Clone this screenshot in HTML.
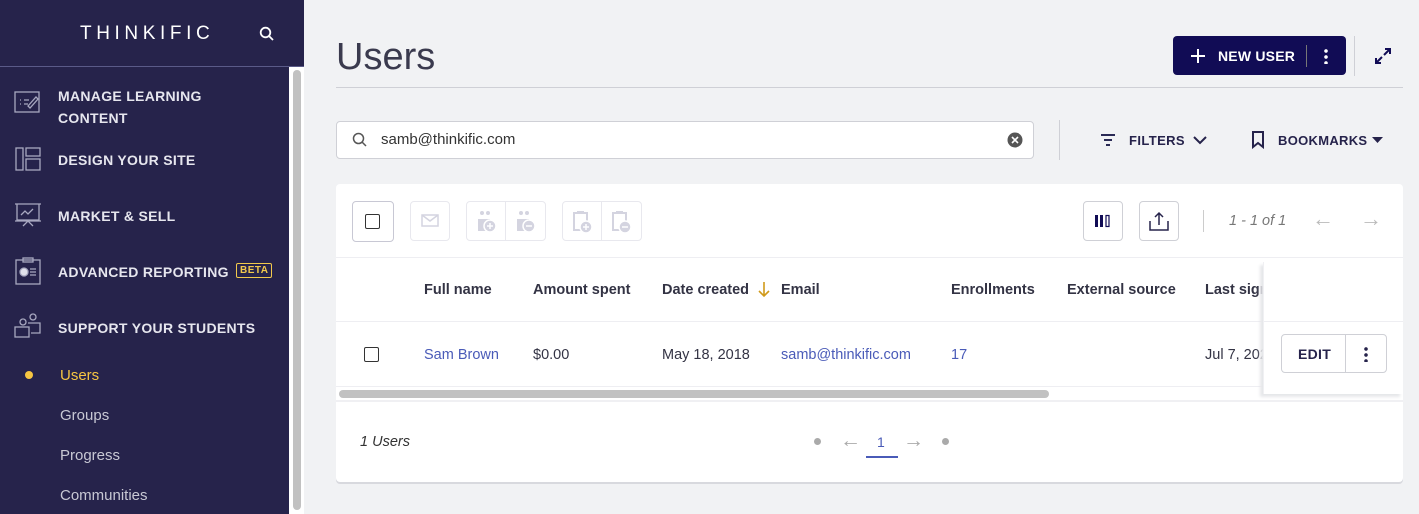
<!DOCTYPE html>
<html><head><meta charset="utf-8"><style>
*{box-sizing:border-box;margin:0;padding:0}
body{width:1419px;height:514px;overflow:hidden;background:#f1f2f4;font-family:"Liberation Sans",sans-serif;position:relative}
.a{position:absolute}
.side{left:0;top:0;width:304px;height:514px;background:#26234b}
.nav{color:#e6e6ee;font-size:14px;font-weight:bold;letter-spacing:.3px}
.sub{color:#c8c8d4;font-size:15px}
.btn{border:1px solid #e8e8ee;border-radius:4px;background:#fff}
.th{font-size:14.5px;font-weight:bold;color:#333344;top:282px}
.td{font-size:14.5px;color:#333344;top:347px}
.lk{color:#4a5bb8}
</style></head><body>
<div class="a side"></div>
<div class="a" style="left:0;top:66px;width:304px;height:1px;background:#5a5a88"></div>
<div class="a" style="left:80px;top:23px;color:#fff;font-size:19px;letter-spacing:4.6px">THINKIFIC</div>
<svg class="a" style="left:259px;top:26px" width="16" height="16" viewBox="0 0 16 16"><circle cx="6.5" cy="6.5" r="4.8" fill="none" stroke="#fff" stroke-width="1.8"/><path d="M10 10l4 4" stroke="#fff" stroke-width="1.8"/></svg>
<div class="a" style="left:289px;top:67px;width:15px;height:447px;background:#fff"></div>
<div class="a" style="left:293px;top:70px;width:8px;height:440px;background:#c1c1c1;border-radius:4px"></div>
<svg class="a" style="left:14px;top:88px" width="28" height="28" viewBox="0 0 28 28" fill="none" stroke="#a8a8c0" stroke-width="1.3"><rect x="1" y="4" width="24" height="20"/><path d="M6 12h1M6 16h1M10 12h5M10 16h4M14 18l8-9 2 2-8 9z"/></svg>
<div class="a nav" style="left:58px;top:85px;line-height:22px">MANAGE LEARNING<br>CONTENT</div>
<svg class="a" style="left:15px;top:147px" width="26" height="24" viewBox="0 0 26 24" fill="none" stroke="#a8a8c0" stroke-width="1.3"><rect x="1" y="1" width="7" height="22"/><rect x="11" y="1" width="14" height="8"/><rect x="11" y="12" width="14" height="11"/></svg>
<div class="a nav" style="left:58px;top:152px">DESIGN YOUR SITE</div>
<svg class="a" style="left:14px;top:203px" width="28" height="24" viewBox="0 0 28 24" fill="none" stroke="#a8a8c0" stroke-width="1.3"><path d="M1 1h26M3 1v16h22V1M1 18h26M9 23l5-5 5 5M7 12l4-4 3 3 5-5"/></svg>
<div class="a nav" style="left:58px;top:208px">MARKET &amp; SELL</div>
<svg class="a" style="left:15px;top:257px" width="26" height="28" viewBox="0 0 26 28" fill="none" stroke="#a8a8c0" stroke-width="1.3"><rect x="1" y="3" width="24" height="24"/><rect x="8" y="1" width="10" height="4"/><circle cx="9" cy="15" r="4" fill="#e0e0ea"/><path d="M15 12h6M15 15h6M15 18h6"/></svg>
<div class="a nav" style="left:58px;top:264px">ADVANCED REPORTING</div>
<div class="a" style="left:236px;top:263px;border:1px solid #f2c94c;color:#f2c94c;font-size:10px;font-weight:bold;padding:1px 3px;border-radius:2px;letter-spacing:.5px">BETA</div>
<svg class="a" style="left:14px;top:313px" width="28" height="26" viewBox="0 0 28 26" fill="none" stroke="#a8a8c0" stroke-width="1.3"><circle cx="9" cy="9" r="3"/><circle cx="19" cy="4" r="3"/><rect x="1" y="14" width="14" height="10"/><path d="M14 10h12v10h-9"/></svg>
<div class="a nav" style="left:58px;top:320px">SUPPORT YOUR STUDENTS</div>
<div class="a" style="left:25px;top:371px;width:8px;height:8px;border-radius:50%;background:#f6c542"></div>
<div class="a" style="left:60px;top:367px;color:#f6c542;font-size:15px">Users</div>
<div class="a sub" style="left:60px;top:407px">Groups</div>
<div class="a sub" style="left:60px;top:447px">Progress</div>
<div class="a sub" style="left:60px;top:487px">Communities</div>

<div class="a" style="left:336px;top:36px;font-size:38px;color:#3a3a4e;font-weight:300">Users</div>
<div class="a" style="left:336px;top:87px;width:1067px;height:1px;background:#cfd0d6"></div>
<div class="a" style="left:1173px;top:36px;width:173px;height:39px;background:#110c55;border-radius:4px"></div>
<svg class="a" style="left:1190px;top:48px" width="16" height="16"><path d="M8 1v14M1 8h14" stroke="#fff" stroke-width="2"/></svg>
<div class="a" style="left:1218px;top:48px;color:#fff;font-size:14px;font-weight:bold;letter-spacing:.2px">NEW USER</div>
<div class="a" style="left:1306px;top:45px;width:1px;height:22px;background:#777"></div>
<div class="a" style="left:1324px;top:48px;width:4px;height:16px;background:radial-gradient(circle,#fff 1.6px,transparent 2px) 0 0/4px 6px"></div>
<div class="a" style="left:1354px;top:36px;width:1px;height:40px;background:#cfd0d6"></div>
<svg class="a" style="left:1374px;top:47px" width="18" height="18" viewBox="0 0 18 18" fill="none" stroke="#110c55" stroke-width="2"><path d="M10 8l6-6M11 2h5v5M8 10l-6 6M2 11v5h5"/></svg>

<div class="a" style="left:336px;top:121px;width:698px;height:38px;background:#fff;border:1px solid #cfd0d6;border-radius:4px"></div>
<svg class="a" style="left:352px;top:132px" width="16" height="16"><circle cx="6.5" cy="6.5" r="5" fill="none" stroke="#555" stroke-width="1.5"/><path d="M10 10l4 4" stroke="#555" stroke-width="1.5"/></svg>
<div class="a" style="left:381px;top:131px;font-size:15px;color:#333">samb@thinkific.com</div>
<svg class="a" style="left:1007px;top:132px" width="16" height="16"><circle cx="8" cy="8" r="7.5" fill="#555"/><path d="M5 5l6 6M11 5l-6 6" stroke="#fff" stroke-width="1.6"/></svg>
<div class="a" style="left:1059px;top:120px;width:1px;height:40px;background:#cfd0d6"></div>
<svg class="a" style="left:1100px;top:133px" width="16" height="14"><path d="M1 2h14M4 7h8M6 12h4" stroke="#2a2a55" stroke-width="2"/></svg>
<div class="a" style="left:1129px;top:133px;font-size:13px;font-weight:bold;color:#26234b;letter-spacing:.4px">FILTERS</div>
<svg class="a" style="left:1193px;top:135px" width="14" height="10"><path d="M1 2l6 6 6-6" fill="none" stroke="#26234b" stroke-width="2"/></svg>
<svg class="a" style="left:1251px;top:131px" width="14" height="18"><path d="M2 1h10v15l-5-4-5 4z" fill="none" stroke="#26234b" stroke-width="2"/></svg>
<div class="a" style="left:1278px;top:133px;font-size:13px;font-weight:bold;color:#26234b;letter-spacing:.3px">BOOKMARKS</div>
<svg class="a" style="left:1372px;top:137px" width="11" height="6"><path d="M0 0h11L5.5 6z" fill="#26234b"/></svg>

<div class="a" style="left:336px;top:184px;width:1067px;height:298px;background:#fff;border-radius:4px;box-shadow:0 2px 0 #d8d9de"></div>
<div class="a btn" style="left:352px;top:201px;width:42px;height:41px;border-color:#c8c8d4"></div>
<div class="a" style="left:365px;top:214px;width:15px;height:15px;border:1.5px solid #333;border-radius:2px"></div>
<div class="a btn" style="left:410px;top:201px;width:40px;height:40px"></div>
<svg class="a" style="left:421px;top:214px" width="18" height="13"><rect x="1" y="1" width="16" height="11" fill="none" stroke="#d4d4e0" stroke-width="1.5"/><path d="M1 1l8 6 8-6" fill="none" stroke="#d4d4e0" stroke-width="1.5"/></svg>
<div class="a btn" style="left:466px;top:201px;width:80px;height:40px"></div>
<div class="a" style="left:505px;top:202px;width:1px;height:38px;background:#e8e8ee"></div>
<div class="a btn" style="left:562px;top:201px;width:80px;height:40px"></div>
<div class="a" style="left:601px;top:202px;width:1px;height:38px;background:#e8e8ee"></div>
<svg class="a" style="left:476px;top:210px" width="22" height="24"><circle cx="6" cy="3" r="2" fill="#d4d4e0"/><circle cx="12" cy="3" r="2" fill="#d4d4e0"/><path d="M2 9h12v12H2z" fill="#d4d4e0"/><circle cx="14" cy="16" r="6" fill="#d4d4e0" stroke="#fff" stroke-width="1.5"/><path d="M11 16h6M14 13v6" stroke="#fff" stroke-width="1.5"/></svg>
<svg class="a" style="left:515px;top:210px" width="22" height="24"><circle cx="6" cy="3" r="2" fill="#d4d4e0"/><circle cx="12" cy="3" r="2" fill="#d4d4e0"/><path d="M2 9h12v12H2z" fill="#d4d4e0"/><circle cx="14" cy="16" r="6" fill="#d4d4e0" stroke="#fff" stroke-width="1.5"/><path d="M11 16h6" stroke="#fff" stroke-width="1.5"/></svg>
<svg class="a" style="left:572px;top:210px" width="22" height="24"><rect x="2" y="3" width="13" height="17" fill="none" stroke="#d4d4e0" stroke-width="2"/><rect x="5" y="1" width="7" height="3" fill="#d4d4e0"/><circle cx="14" cy="17" r="6" fill="#d4d4e0" stroke="#fff" stroke-width="1.5"/><path d="M11 17h6M14 14v6" stroke="#fff" stroke-width="1.5"/></svg>
<svg class="a" style="left:611px;top:210px" width="22" height="24"><rect x="2" y="3" width="13" height="17" fill="none" stroke="#d4d4e0" stroke-width="2"/><rect x="5" y="1" width="7" height="3" fill="#d4d4e0"/><circle cx="14" cy="17" r="6" fill="#d4d4e0" stroke="#fff" stroke-width="1.5"/><path d="M11 17h6" stroke="#fff" stroke-width="1.5"/></svg>
<div class="a btn" style="left:1083px;top:201px;width:40px;height:40px;border-color:#cfd0d6"></div>
<svg class="a" style="left:1094px;top:214px" width="18" height="14"><rect x="1" y="1" width="3" height="12" fill="#110c55"/><rect x="6" y="1" width="3" height="12" fill="#110c55"/><rect x="12" y="1.5" width="3" height="11" fill="none" stroke="#110c55" stroke-width="1.2"/></svg>
<div class="a btn" style="left:1139px;top:201px;width:40px;height:40px;border-color:#cfd0d6"></div>
<svg class="a" style="left:1148px;top:210px" width="22" height="22" fill="none" stroke="#26234b" stroke-width="1.5"><path d="M2 11v9h18v-9M11 3v12M7 7l4-4 4 4"/></svg>
<div class="a" style="left:1203px;top:210px;width:1px;height:22px;background:#ccc"></div>
<div class="a" style="left:1229px;top:213px;font-size:14.5px;font-style:italic;color:#777">1 - 1 of 1</div>
<div class="a" style="left:1312px;top:206px;font-size:22px;color:#bbb">←</div>
<div class="a" style="left:1360px;top:206px;font-size:22px;color:#bbb">→</div>

<div class="a" style="left:336px;top:257px;width:1067px;height:1px;background:#eeeef2"></div>
<div class="a" style="left:336px;top:321px;width:1067px;height:1px;background:#eeeef2"></div>
<div class="a" style="left:336px;top:386px;width:1067px;height:1px;background:#eeeef2"></div>
<div class="a th" style="left:424px">Full name</div>
<div class="a th" style="left:533px">Amount spent</div>
<div class="a th" style="left:662px">Date created</div>
<svg class="a" style="left:758px;top:281px" width="12" height="17"><path d="M6 1v14M1 10l5 5 5-5" fill="none" stroke="#d09a1a" stroke-width="1.6"/></svg>
<div class="a th" style="left:781px">Email</div>
<div class="a th" style="left:951px">Enrollments</div>
<div class="a th" style="left:1067px">External source</div>
<div class="a th" style="left:1205px">Last sign</div>
<div class="a" style="left:364px;top:347px;width:15px;height:15px;border:1.5px solid #333;border-radius:2px"></div>
<div class="a td lk" style="left:424px">Sam Brown</div>
<div class="a td" style="left:533px">$0.00</div>
<div class="a td" style="left:662px">May 18, 2018</div>
<div class="a td lk" style="left:781px">samb@thinkific.com</div>
<div class="a td lk" style="left:951px">17</div>
<div class="a td" style="left:1205px">Jul 7, 202</div>
<div class="a" style="left:1263px;top:262px;width:140px;height:132px;background:#fff;box-shadow:-3px 3px 3px #e6e7ea;border-left:1px solid #f0f0f3"></div>
<div class="a" style="left:1264px;top:321px;width:139px;height:1px;background:#eeeef2"></div>
<div class="a" style="left:1281px;top:334px;width:106px;height:39px;border:1px solid #cfd0d6;border-radius:4px;background:#fff"></div>
<div class="a" style="left:1345px;top:335px;width:1px;height:37px;background:#cfd0d6"></div>
<div class="a" style="left:1298px;top:346px;font-size:14px;font-weight:bold;color:#26234b;letter-spacing:.3px">EDIT</div>
<div class="a" style="left:1364px;top:346px;width:4px;height:16px;background:radial-gradient(circle,#26234b 1.6px,transparent 2px) 0 0/4px 6px"></div>
<div class="a" style="left:339px;top:390px;width:710px;height:8px;background:#c1c1c1;border-radius:4px"></div>
<div class="a" style="left:336px;top:400px;width:1067px;height:2px;background:#f0f0f3"></div>
<div class="a" style="left:360px;top:434px;font-size:14.5px;font-style:italic;color:#333">1 Users</div>
<div class="a" style="left:814px;top:438px;width:7px;height:7px;border-radius:50%;background:#aaa"></div>
<div class="a" style="left:840px;top:429px;font-size:21px;color:#aaa">←</div>
<div class="a" style="left:877px;top:434px;font-size:14px;color:#4a5bb8">1</div>
<div class="a" style="left:866px;top:456px;width:32px;height:2px;background:#4a5bb8"></div>
<div class="a" style="left:903px;top:429px;font-size:21px;color:#aaa">→</div>
<div class="a" style="left:942px;top:438px;width:7px;height:7px;border-radius:50%;background:#aaa"></div>
</body></html>
